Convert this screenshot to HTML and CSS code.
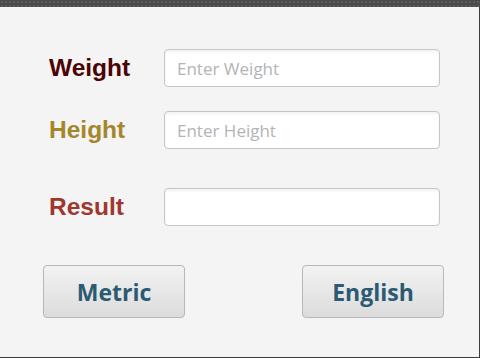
FILE: index.html
```html
<!DOCTYPE html>
<html lang="en">
<head>
  <meta name="viewport" content="width=device-width, initial-scale=1.0">
  <title>BMI Calculator</title>
  <link rel="stylesheet" href="styles.css">
</head>
<body>

<div class="title-strip"></div>

<div class="window">
  <div class="form">
    <label class="label weight" for="weight">Weight</label>
    <input id="weight" class="field" type="text" placeholder="Enter Weight">

    <label class="label height" for="height">Height</label>
    <input id="height" class="field" type="text" placeholder="Enter Height">

    <label class="label result" for="result">Result</label>
    <input id="result" class="field" type="text">
  </div>

  <div class="buttons">
    <button class="btn">Metric</button>
    <button class="btn">English</button>
  </div>
</div>

</body>
</html>
```

FILE: styles.css
```css
html, body {
  margin: 0;
  height: 100%;
}

body {
  background: #f4f4f4;
  font-family: "Liberation Sans", Arial, sans-serif;
  overflow: hidden;
}

/* Dark dotted strip at the top */
.title-strip {
  height: 7px;
  background-color: #4a4a4a;
  background-image: radial-gradient(#5c5c5c 35%, transparent 40%);
  background-size: 4px 4px;
}

/* Main pane */
.window {
  width: 479px;
  height: 350px;
  background: #f4f4f4;
  border-right: 1px solid #3c3c3c;
  border-bottom: 1px solid #3c3c3c;
}

.form {
  display: grid;
  grid-template-columns: 115px 276px;
  grid-template-rows: 38px 38px 53px;
  row-gap: 24px;
  align-items: end;
  padding: 42px 0 0 49px;
}

.label {
  font-size: 24.5px;
  line-height: 38px;
  font-weight: bold;
}

.weight { color: #4b0303; }
.height { color: #a6862a; }
.result { color: #a0372f; }

.field {
  box-sizing: border-box;
  height: 38px;
  width: 276px;
  margin: 0;
  padding: 0 12px;
  border: 1px solid #c6c6c6;
  border-radius: 4px;
  background: #fff;
  box-shadow: inset 0 2px 3px rgba(0, 0, 0, 0.06);
  font-family: "Open Sans", sans-serif;
  font-size: 17px;
  color: #333;
  outline: none;
}

.field::placeholder {
  color: #b3b3b8;
}

/* Bottom buttons */
.buttons {
  display: flex;
  gap: 117px;
  padding: 39px 0 0 43px;
}

.btn {
  width: 142px;
  height: 53px;
  border: 1px solid #b8b8b8;
  border-radius: 4px;
  background: linear-gradient(#f2f2f2, #dcdcdc);
  font-family: "Open Sans", sans-serif;
  font-size: 23px;
  font-weight: bold;
  color: #2b5a72;
  cursor: pointer;
}
```
